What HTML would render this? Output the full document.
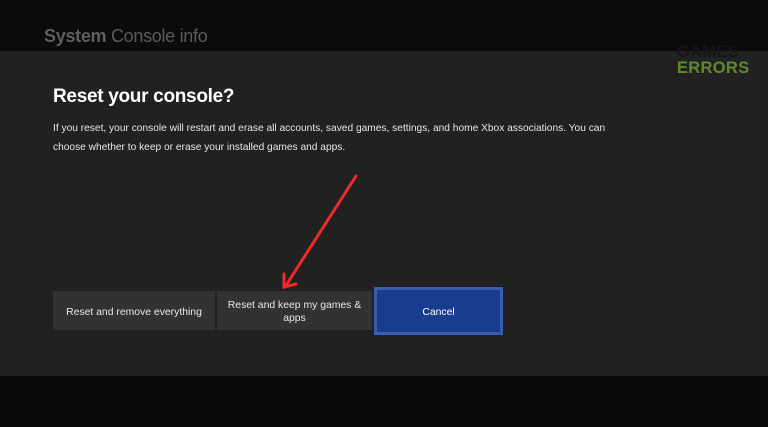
<!DOCTYPE html>
<html><head><style>
body{margin:0;width:768px;height:427px;background:#0a0a0a;position:relative;overflow:hidden;font-family:"Liberation Sans",sans-serif;}
.top{position:absolute;left:0;top:0;width:768px;height:51px;background:#0b0b0b;}
.title{position:absolute;left:44px;top:26px;font-size:18px;color:#5a5a5a;letter-spacing:-0.3px;}
.title b{color:#5e5e5e;}
.panel{position:absolute;left:0;top:51px;width:768px;height:325px;background:#212121;}
.logo{position:absolute;left:677px;top:44px;font-weight:bold;font-size:16.5px;line-height:16px;letter-spacing:0.3px;}
.logo .g{color:#151515;}
.logo .e{color:#5f8a2a;}
h1{position:absolute;left:53px;top:86px;margin:0;font-size:19px;color:#fff;font-weight:bold;letter-spacing:-0.3px;}
p{position:absolute;left:53px;top:120px;margin:0;width:570px;font-size:10.2px;line-height:18.5px;color:#e6e6e6;}
.btn{position:absolute;top:291px;height:39px;padding-top:3px;box-sizing:border-box;background:#323232;color:#e8e8e8;font-size:10.4px;display:flex;align-items:center;justify-content:center;text-align:center;line-height:13px;}
.cancel{position:absolute;left:374px;top:287px;width:123px;height:42px;padding-top:3px;box-sizing:content-box;background:#193c8e;border:3px solid #3a5cb0;color:#fff;font-size:10.4px;display:flex;align-items:center;justify-content:center;}
</style></head><body>
<div class="top"></div>
<div class="title"><b>System</b> Console info</div>
<div class="panel"></div>
<div class="logo"><div class="g">GAMES</div><div class="e">ERRORS</div></div>
<h1>Reset your console?</h1>
<p>If you reset, your console will restart and erase all accounts, saved games, settings, and home Xbox associations. You can choose whether to keep or erase your installed games and apps.</p>
<div class="btn" style="left:53px;width:162px;">Reset and remove everything</div>
<div class="btn" style="left:217px;width:155px;">Reset and keep my games &amp;<br>apps</div>
<div class="cancel" style="height:39px;">Cancel</div>
<svg style="position:absolute;left:0;top:0" width="768" height="427">
<g stroke="#f02a2a" stroke-width="3" stroke-linecap="round" fill="none">
<line x1="356" y1="176" x2="285" y2="287"/>
<polyline points="284,274 284,287 296,284"/>
</g>
</svg>
</body></html>
